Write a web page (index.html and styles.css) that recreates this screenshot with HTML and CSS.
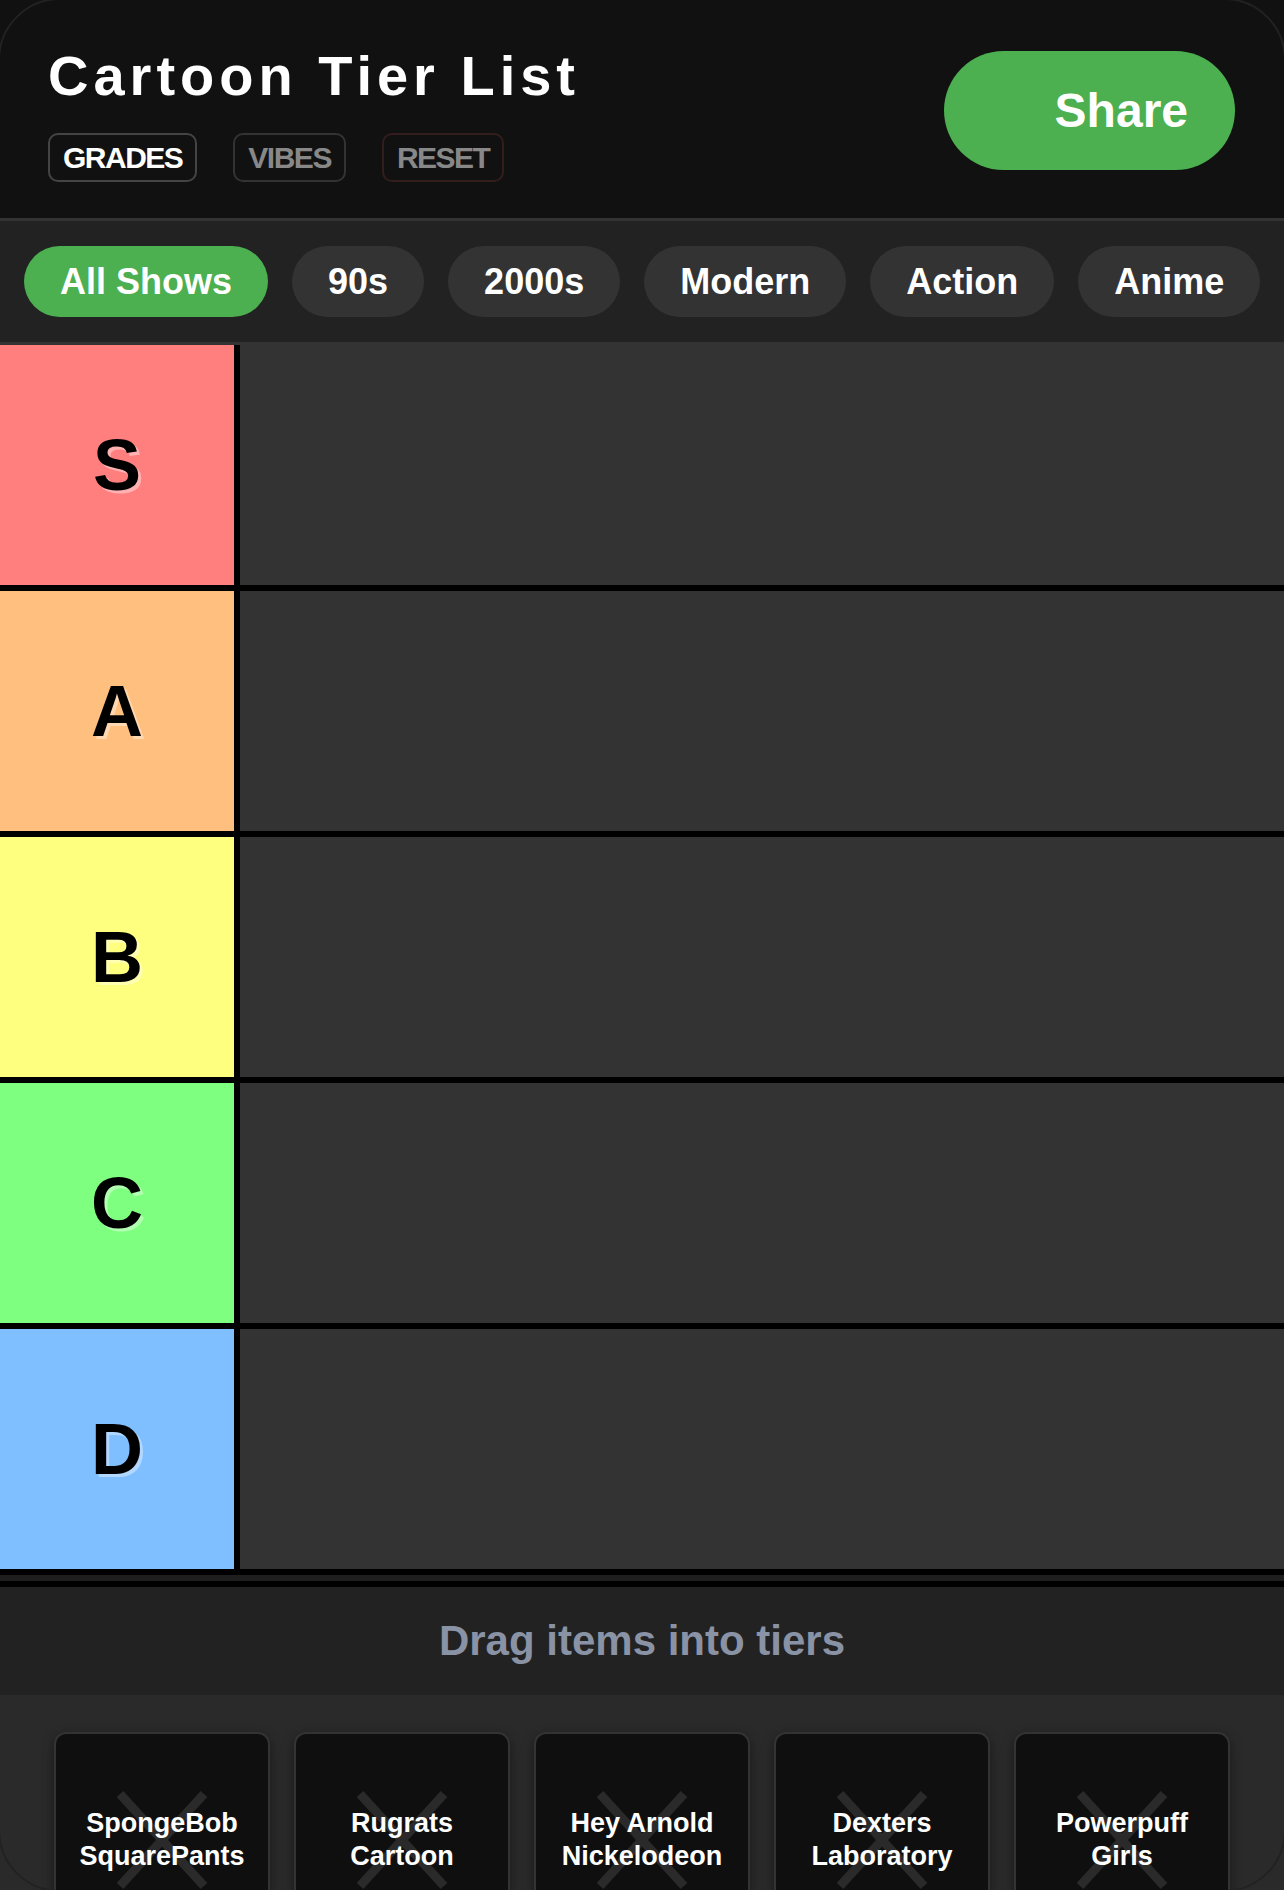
FILE: index.html
```html
<!DOCTYPE html>
<html lang="en">
<head>
    <meta charset="UTF-8">
    <meta name="viewport" content="width=device-width, initial-scale=1.0">
    <title>Cartoon Tier List</title>
    <link rel="stylesheet" href="styles.css">
</head>
<body>
    <div class="app">
        <header class="top-bar">
            <div class="title-block">
                <h1>Cartoon Tier List</h1>
                <div class="modes">
                    <button class="mode active">GRADES</button>
                    <button class="mode">VIBES</button>
                    <button class="mode reset">RESET</button>
                </div>
            </div>
            <button class="share-btn">Share</button>
        </header>

        <nav class="filters">
            <button class="pill active">All Shows</button>
            <button class="pill">90s</button>
            <button class="pill">2000s</button>
            <button class="pill">Modern</button>
            <button class="pill">Action</button>
            <button class="pill">Anime</button>
        </nav>

        <div class="tiers">
            <div class="tier">
                <div class="tier-label tier-s">S</div>
                <div class="tier-drop"></div>
            </div>
            <div class="tier">
                <div class="tier-label tier-a">A</div>
                <div class="tier-drop"></div>
            </div>
            <div class="tier">
                <div class="tier-label tier-b">B</div>
                <div class="tier-drop"></div>
            </div>
            <div class="tier">
                <div class="tier-label tier-c">C</div>
                <div class="tier-drop"></div>
            </div>
            <div class="tier">
                <div class="tier-label tier-d">D</div>
                <div class="tier-drop"></div>
            </div>
        </div>

        <div class="pool-area">
            <p class="pool-hint">Drag items into tiers</p>
            <div class="pool">
                <div class="card">
                    <svg class="card-x" viewBox="0 0 96 100"><path d="M6 4 L90 96 M90 4 L6 96"/></svg>
                    <span>SpongeBob SquarePants</span>
                </div>
                <div class="card">
                    <svg class="card-x" viewBox="0 0 96 100"><path d="M6 4 L90 96 M90 4 L6 96"/></svg>
                    <span>Rugrats Cartoon</span>
                </div>
                <div class="card">
                    <svg class="card-x" viewBox="0 0 96 100"><path d="M6 4 L90 96 M90 4 L6 96"/></svg>
                    <span>Hey Arnold Nickelodeon</span>
                </div>
                <div class="card">
                    <svg class="card-x" viewBox="0 0 96 100"><path d="M6 4 L90 96 M90 4 L6 96"/></svg>
                    <span>Dexters Laboratory</span>
                </div>
                <div class="card">
                    <svg class="card-x" viewBox="0 0 96 100"><path d="M6 4 L90 96 M90 4 L6 96"/></svg>
                    <span>Powerpuff Girls</span>
                </div>
            </div>
        </div>
    </div>
</body>
</html>
```

FILE: styles.css
```css
* {
    box-sizing: border-box;
}

body {
    margin: 0;
    background-color: #111;
    font-family: "Liberation Sans", Arial, sans-serif;
    color: #fff;
}

button {
    font-family: inherit;
    font-weight: bold;
    cursor: pointer;
    border: none;
}

.app {
    position: relative;
    height: 100vh;
    overflow: hidden;
    background-color: #1e1e1e;
}

/* rounded frame drawn over the page, straight edges pushed off screen */
.app::after {
    content: "";
    position: absolute;
    inset: -2px;
    border: 2px solid #222;
    border-radius: 62px;
    pointer-events: none;
}

.top-bar {
    display: flex;
    justify-content: space-between;
    align-items: flex-start;
    padding: 44px 49px 36px 48px;
    background-color: #111;
    border-bottom: 3px solid #333;
}

.title-block {
    display: flex;
    flex-direction: column;
    gap: 25px;
}

h1 {
    margin: 0;
    font-size: 56px;
    line-height: 64px;
    letter-spacing: 5px;
}

.modes {
    display: flex;
    gap: 36px;
}

.mode {
    padding: 6px 13px;
    font-size: 30px;
    line-height: 33px;
    letter-spacing: -1.5px;
    color: #888;
    background: transparent;
    border: 2px solid #333;
    border-radius: 10px;
}
.mode.active {
    color: #fff;
    border-color: #444;
}
.mode.reset {
    border-color: #331d1d;
}

.share-btn {
    margin-top: 7px;
    padding: 32px 47px 32px 111px;
    font-size: 48px;
    line-height: 55px;
    color: #fff;
    background-color: #4caf50;
    border-radius: 999px;
}

.filters {
    display: flex;
    gap: 24px;
    padding: 25px 24px;
    background-color: #222;
    border-bottom: 3px solid #333;
    white-space: nowrap;
    overflow: hidden;
}

.pill {
    flex-shrink: 0;
    padding: 15px 36px;
    font-size: 36px;
    line-height: 41px;
    color: #fff;
    background-color: #333;
    border-radius: 999px;
}
.pill.active {
    background-color: #4caf50;
}

.tiers {
    display: flex;
    flex-direction: column;
    gap: 6px;
    padding-bottom: 6px;
    background-color: #000;
}

.tier {
    display: flex;
    gap: 6px;
    height: 240px;
}

.tier-label {
    width: 234px;
    display: flex;
    justify-content: center;
    align-items: center;
    font-size: 72px;
    font-weight: bold;
    color: #000;
    text-shadow: 3px 3px 0 rgba(255, 255, 255, 0.4);
}
.tier-s { background-color: #ff7f7f; }
.tier-a { background-color: #ffbf7f; }
.tier-b { background-color: #ffff7f; }
.tier-c { background-color: #7fff7f; }
.tier-d { background-color: #7fbfff; }

.tier-drop {
    flex: 1;
    background-color: #333;
}

.pool-area {
    margin-top: 6px;
    border-top: 6px solid #000;
}

.pool-hint {
    margin: 0;
    padding: 30px 0;
    font-size: 42px;
    line-height: 48px;
    font-weight: bold;
    text-align: center;
    color: #8a93a5;
    background-color: #222;
}

.pool {
    display: flex;
    flex-wrap: wrap;
    justify-content: center;
    gap: 24px;
    padding: 37px 54px;
    background-color: #2a2a2a;
    min-height: 600px;
}

.card {
    position: relative;
    width: 216px;
    height: 216px;
    display: flex;
    justify-content: center;
    align-items: center;
    padding: 12px;
    background-color: #0f0f0f;
    border: 2px solid #333;
    border-radius: 12px;
    box-shadow: 0 4px 12px rgba(0, 0, 0, 0.4);
    text-align: center;
}

.card span {
    position: relative;
    font-size: 27px;
    line-height: 33px;
    font-weight: bold;
}

.card-x {
    position: absolute;
    left: 58px;
    top: 56px;
    width: 96px;
    height: 100px;
}
.card-x path {
    stroke: #2a2a2a;
    stroke-width: 9;
    fill: none;
}
```
